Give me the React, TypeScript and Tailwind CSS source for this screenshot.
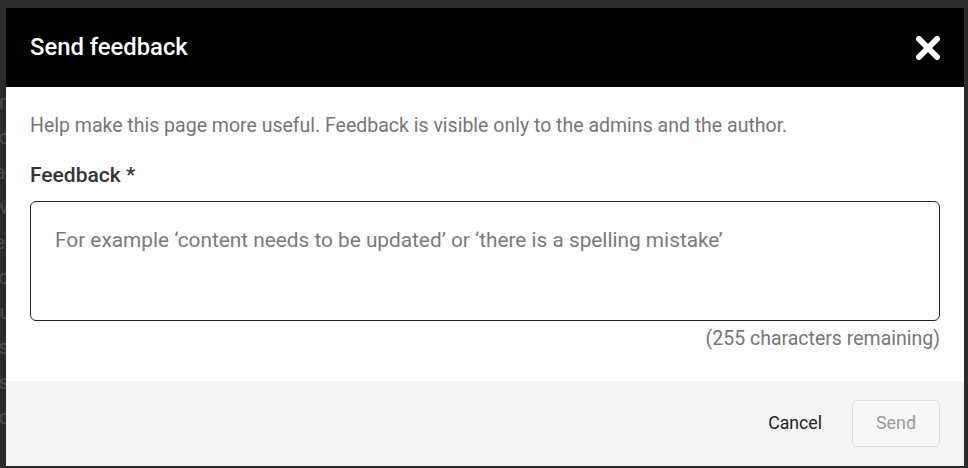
import React from 'react';

const font = { fontFamily: 'Roboto, "Liberation Sans", sans-serif' };

function CloseIcon() {
    return (
        <svg width="26" height="26" viewBox="0 0 26 26" aria-hidden="true">
            <path d="M4 4 L22 22 M22 4 L4 22" stroke="#fff" strokeWidth="6" strokeLinecap="round" />
        </svg>
    );
}

export default function App() {
    // page text behind the overlay, only a sliver shows at the left edge
    const behind = ['an', 'ec', 'ta', 'ov', 'te', 'sc', 'ou', 'ss', 'es', 'ed'];

    return (
        <div className="relative w-[968px] h-[468px] bg-[#2b2b2b] overflow-hidden" style={font}>
            <div className="absolute left-[-12px] top-[90px] flex flex-col gap-[11px] text-[20px] leading-[24px] text-[#4a4a4a]">
                {behind.map((c, i) => (
                    <span key={i}>{c}</span>
                ))}
            </div>

            <div className="absolute left-[6px] top-[8px] w-[958px] h-[458px] flex flex-col bg-white">
                <div className="h-[79px] bg-black flex items-center justify-between pl-[24px] pr-[23px] shrink-0">
                    <h2 className="text-white text-[23.8px] font-medium">Send feedback</h2>
                    <button className="w-[26px] h-[26px] flex items-center justify-center">
                        <CloseIcon />
                    </button>
                </div>

                <div className="flex-1 px-[24px] pt-[27px]">
                    <p className="text-[19.5px] leading-[24px] text-[#767676]">
                        Help make this page more useful. Feedback is visible only to the admins and the author.
                    </p>
                    <label className="block mt-[25px] text-[21px] leading-[24px] font-medium text-[#333]">Feedback *</label>
                    <div className="mt-[14px] h-[120px] border border-[#222] rounded-[6px] px-[24px] pt-[25px]">
                        <span className="text-[20.8px] leading-[26px] text-[#7a7a7a]">
                            For example ‘content needs to be updated’ or ‘there is a spelling mistake’
                        </span>
                    </div>
                    <div className="mt-[6px] text-right text-[19.5px] leading-[24px] text-[#767676]">(255 characters remaining)</div>
                </div>

                <div className="h-[85px] shrink-0 bg-[#f4f4f4] flex items-center justify-end pr-[24px] gap-[30px]">
                    <button className="text-[17.7px] text-[#222]">Cancel</button>
                    <button className="w-[88px] h-[47px] border border-[#dcdcdc] rounded-[5px] bg-[#f7f7f7] text-[17.9px] text-[#9a9a9a]">
                        Send
                    </button>
                </div>
            </div>
        </div>
    );
}
